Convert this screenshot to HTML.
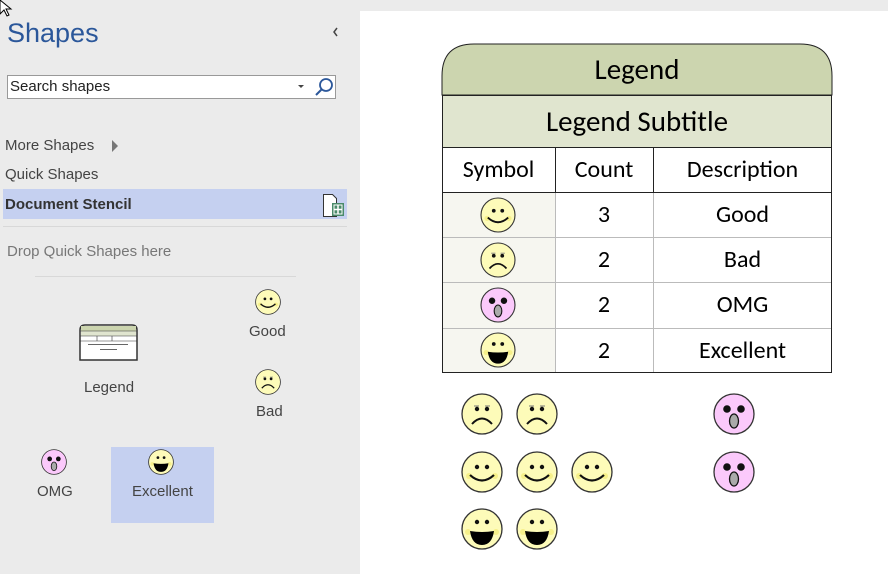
<!DOCTYPE html>
<html><head><meta charset="utf-8"><style>
body{margin:0;width:888px;height:574px;overflow:hidden;background:#ebebeb;font-family:"Segoe UI","Liberation Sans",sans-serif;position:relative}
.a{position:absolute;white-space:nowrap}
.c{font-family:Carlito,"Liberation Sans",sans-serif;color:#000;text-align:center;font-size:24px}
.p{color:#444;font-size:15px}
</style></head><body>
<svg width="888" height="574" style="position:absolute;left:0;top:0">
<defs>
<g id="good"><circle r="20" fill="#fdfbb9" stroke="#333" stroke-width="1.3"/><circle cx="-13" cy="4" r="3" fill="#f6f08a"/><circle cx="13" cy="4" r="3" fill="#f6f08a"/><circle cx="-5" cy="-5" r="2.2" fill="#111"/><circle cx="5" cy="-5" r="2.2" fill="#111"/><path d="M-12,3 Q0,14 12,3" fill="none" stroke="#111" stroke-width="2.2"/></g>
<g id="bad"><circle r="20" fill="#fdfbb9" stroke="#333" stroke-width="1.3"/><circle cx="-5" cy="-5" r="2.2" fill="#111"/><circle cx="5" cy="-5" r="2.2" fill="#111"/><path d="M-8,-8 L-3,-8 M3,-8 L8,-8" stroke="#777" stroke-width="1"/><path d="M-10,10 Q0,-1 10,10" fill="none" stroke="#111" stroke-width="2"/></g>
<g id="omg"><circle r="20" fill="#fbc9fb" stroke="#333" stroke-width="1.3"/><circle cx="-7" cy="-5" r="3.8" fill="#111"/><circle cx="7" cy="-5" r="3.8" fill="#111"/><ellipse cx="0" cy="7" rx="4.5" ry="7" fill="#aaa" stroke="#111" stroke-width="1.3"/></g>
<g id="exc"><circle r="20" fill="#fdfbb9" stroke="#333" stroke-width="1.3"/><circle cx="-14" cy="3" r="3" fill="#f6f08a"/><circle cx="14" cy="3" r="3" fill="#f6f08a"/><circle cx="-5" cy="-7" r="2.2" fill="#111"/><circle cx="5" cy="-7" r="2.2" fill="#111"/><path d="M-12,2 Q0,4 12,2 Q10,16 0,16 Q-10,16 -12,2Z" fill="#000"/></g>
</defs>
<rect x="360" y="11" width="528" height="563" fill="#fff"/>
<path d="M442,95 V76 Q442,44 474,44 H800 Q832,44 832,76 V95Z" fill="#ccd5af" stroke="#222" stroke-width="1"/>
<rect x="442.5" y="95.5" width="389" height="52" fill="#e0e5cf" stroke="#222"/>
<rect x="442.5" y="147.5" width="389" height="225" fill="#fff" stroke="#222"/>
<rect x="443" y="193" width="112" height="179" fill="#f6f6f0"/>
<line x1="442" y1="192.5" x2="832" y2="192.5" stroke="#222"/>
<line x1="555.5" y1="147" x2="555.5" y2="192" stroke="#222"/>
<line x1="653.5" y1="147" x2="653.5" y2="192" stroke="#222"/>
<g stroke="#bbb"><line x1="555.5" y1="193" x2="555.5" y2="372"/><line x1="653.5" y1="193" x2="653.5" y2="372"/><line x1="443" y1="237.5" x2="831" y2="237.5"/><line x1="443" y1="282.5" x2="831" y2="282.5"/><line x1="443" y1="328.5" x2="831" y2="328.5"/></g>
<use href="#good" transform="translate(498,215) scale(0.85)"/>
<use href="#bad" transform="translate(498,260) scale(0.85)"/>
<use href="#omg" transform="translate(498,305) scale(0.85)"/>
<use href="#exc" transform="translate(498,350) scale(0.85)"/>
<use href="#bad" transform="translate(482,414)"/><use href="#bad" transform="translate(537,414)"/>
<use href="#good" transform="translate(482,472)"/><use href="#good" transform="translate(537,472)"/><use href="#good" transform="translate(592,472)"/>
<use href="#exc" transform="translate(482,529)"/><use href="#exc" transform="translate(537,529)"/>
<use href="#omg" transform="translate(734,414)"/><use href="#omg" transform="translate(734,472)"/>
<rect x="7.5" y="75.5" width="328" height="23" fill="#fff" stroke="#999"/>
<path d="M298,85 h6 l-3,3z" fill="#444"/>
<circle cx="326" cy="85" r="6" fill="none" stroke="#2b579a" stroke-width="1.8"/><line x1="322" y1="89" x2="316" y2="95" stroke="#2b579a" stroke-width="2"/>
<path d="M337,28 l-3,4 l3,4" fill="none" stroke="#444" stroke-width="1.5"/>
<path d="M112,140 l6,6 l-6,6z" fill="#777"/>
<rect x="3" y="189" width="344" height="30" fill="#c5d0f0"/>
<path d="M323.5,194.5 h9 l4,4 v18 h-13z" fill="#fff" stroke="#333"/>
<rect x="332" y="203" width="12" height="13" fill="#4a8a6a"/><path d="M334,209.5 h8 M338,205 v9" stroke="#fff" stroke-width="1.5"/><rect x="334" y="205" width="8" height="9" fill="none" stroke="#fff"/>
<line x1="3" y1="226.5" x2="347" y2="226.5" stroke="#d8d8d8"/>
<line x1="35" y1="276.5" x2="296" y2="276.5" stroke="#d8d8d8"/>
<rect x="111" y="447" width="103" height="76" fill="#c5d0f0"/>
<path d="M80,330 Q80,325 85,325 H132 Q137,325 137,330 V360 H80Z" fill="#fff" stroke="#333" stroke-width="1.5"/>
<rect x="81" y="326" width="55" height="5" fill="#ccd5af"/><rect x="81" y="331" width="55" height="5" fill="#e0e5cf"/>
<g stroke="#333" stroke-width="0.6"><line x1="80" y1="331" x2="137" y2="331"/><line x1="80" y1="336" x2="137" y2="336"/><line x1="80" y1="341" x2="137" y2="341"/><line x1="97" y1="336" x2="97" y2="341"/><line x1="112" y1="336" x2="112" y2="341"/></g>
<g fill="#666"><rect x="88" y="344" width="40" height="1"/><rect x="100" y="349" width="17" height="1"/></g>
<use href="#good" transform="translate(268,302) scale(0.62)"/>
<use href="#bad" transform="translate(268,382) scale(0.62)"/>
<use href="#omg" transform="translate(54,462) scale(0.62)"/>
<use href="#exc" transform="translate(161,462) scale(0.62)"/>
<path d="M0,0 V14 L4,10 L7,16 L9,15 L6,9 H11Z" fill="#fff" stroke="#000" stroke-width="1"/>
</svg>
<div class="a" style="left:7px;top:18px;font-size:27px;color:#2b579a">Shapes</div>
<div class="a" style="left:10px;top:78px;font-size:15px;color:#222">Search shapes</div>
<div class="a p" style="left:5px;top:137px">More Shapes</div>
<div class="a p" style="left:5px;top:166px">Quick Shapes</div>
<div class="a p" style="left:5px;top:196px;font-weight:bold;color:#333">Document Stencil</div>
<div class="a p" style="left:7px;top:243px;color:#777">Drop Quick Shapes here</div>
<div class="a p" style="left:84px;top:379px">Legend</div>
<div class="a p" style="left:249px;top:323px">Good</div>
<div class="a p" style="left:256px;top:403px">Bad</div>
<div class="a p" style="left:37px;top:483px">OMG</div>
<div class="a p" style="left:132px;top:483px">Excellent</div>
<div class="a c" style="left:442px;width:390px;top:51px;font-size:29px">Legend</div>
<div class="a c" style="left:442px;width:390px;top:103px;font-size:29px">Legend Subtitle</div>
<div class="a c" style="left:442px;width:113px;top:155px">Symbol</div>
<div class="a c" style="left:555px;width:98px;top:155px">Count</div>
<div class="a c" style="left:653px;width:179px;top:155px">Description</div>
<div class="a c" style="left:555px;width:98px;top:200px">3</div>
<div class="a c" style="left:653px;width:179px;top:200px">Good</div>
<div class="a c" style="left:555px;width:98px;top:245px">2</div>
<div class="a c" style="left:653px;width:179px;top:245px">Bad</div>
<div class="a c" style="left:555px;width:98px;top:290px">2</div>
<div class="a c" style="left:653px;width:179px;top:290px">OMG</div>
<div class="a c" style="left:555px;width:98px;top:336px">2</div>
<div class="a c" style="left:653px;width:179px;top:336px">Excellent</div>
</body></html>
